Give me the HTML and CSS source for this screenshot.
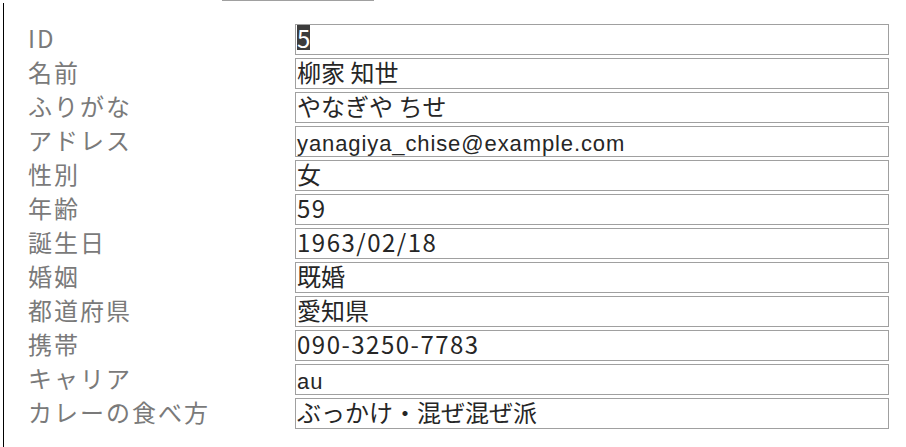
FILE: index.html
```
<!DOCTYPE html>
<html lang="ja">
<head>
<meta charset="utf-8">
<title>詳細</title>
<link rel="stylesheet" href="styles.css">
</head>
<body>
<div class="topline"></div>
<div class="panel">
  <div class="form">
    <div class="label">ID</div><div class="field"><span class="sel">5</span></div>
    <div class="label">名前</div><div class="field">柳家 知世</div>
    <div class="label">ふりがな</div><div class="field">やなぎや ちせ</div>
    <div class="label">アドレス</div><div class="field latin">yanagiya_chise@example.com</div>
    <div class="label">性別</div><div class="field">女</div>
    <div class="label">年齢</div><div class="field num">59</div>
    <div class="label">誕生日</div><div class="field num">1963/02/18</div>
    <div class="label">婚姻</div><div class="field">既婚</div>
    <div class="label">都道府県</div><div class="field">愛知県</div>
    <div class="label">携帯</div><div class="field num">090-3250-7783</div>
    <div class="label">キャリア</div><div class="field latin">au</div>
    <div class="label">カレーの食べ方</div><div class="field">ぶっかけ・混ぜ混ぜ派</div>
  </div>
</div>
</body>
</html>
```
FILE: styles.css
```
html, body {
  margin: 0;
  padding: 0;
  background: #ffffff;
  height: 100%;
}
body {
  display: flex;
  flex-direction: column;
  font-family: "Noto Sans CJK JP", "Noto Sans", sans-serif;
}
.topline {
  margin-left: 222px;
  width: 152px;
  height: 1px;
  background: #a0a0a0;
  flex: none;
}
.panel {
  flex: 1;
  margin-top: 2px;
  margin-left: 3px;
  border-left: 1px solid #000000;
  padding: 21px 0 0 24px;
}
.form {
  display: grid;
  grid-template-columns: 267px 594px;
  grid-auto-rows: 31px;
  row-gap: 3px;
}
.label {
  font-size: 24px;
  letter-spacing: 2px;
  line-height: 27px;
  color: #7a7a7a;
  white-space: nowrap;
}
.field {
  box-sizing: border-box;
  border: 1px solid #a0a0a0;
  padding-left: 1px;
  font-size: 24px;
  line-height: 25px;
  color: #262626;
  white-space: nowrap;
}
.field.num {
  letter-spacing: 1.5px;
}
.field.latin {
  font-family: "Liberation Sans", "Noto Sans CJK JP", sans-serif;
  font-size: 22px;
  letter-spacing: 0.9px;
  padding-top: 4px;
}
.sel {
  display: inline-block;
  height: 25px;
  line-height: 25px;
  background: #3c3c3c;
  color: #ffffff;
}
```
